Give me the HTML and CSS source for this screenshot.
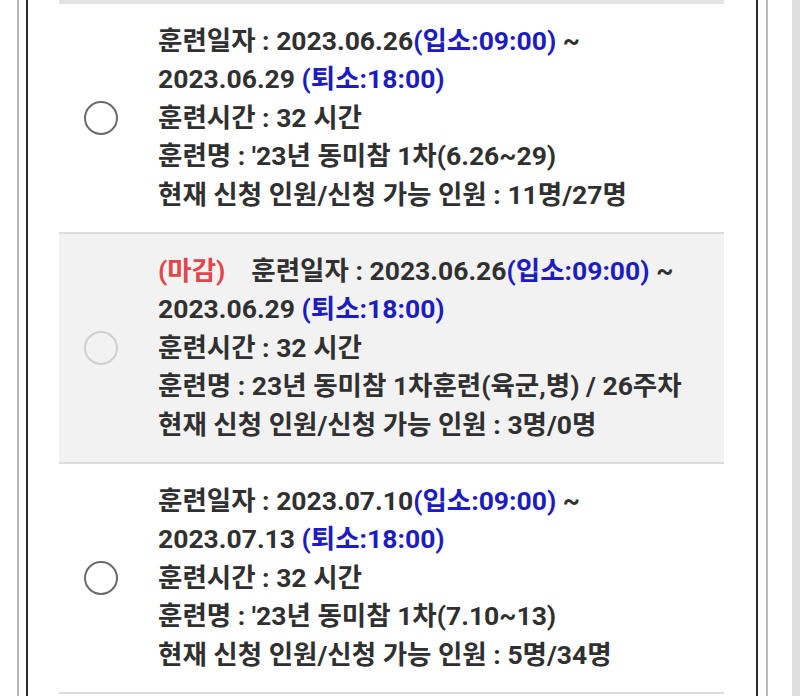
FILE: index.html
```html
<!DOCTYPE html>
<html lang="ko">
<head>
    <meta charset="UTF-8">
    <meta name="viewport" content="width=device-width, initial-scale=1.0">
    <title>훈련 신청</title>
    <link rel="stylesheet" href="styles.css">
</head>
<body>
    <div class="frame">
        <div class="panel">
            <ul class="course-list">
                <li class="course">
                    <span class="radio"></span>
                    <div class="info">
                        <p>훈련일자 : 2023.06.26<span class="time">(입소:09:00)</span> ~<br>2023.06.29 <span class="time">(퇴소:18:00)</span></p>
                        <p>훈련시간 : 32 시간</p>
                        <p>훈련명 : '23년 동미참 1차(6.26~29)</p>
                        <p>현재 신청 인원/신청 가능 인원 : 11명/27명</p>
                    </div>
                </li>
                <li class="course closed">
                    <span class="radio"></span>
                    <div class="info">
                        <p><span class="badge">(마감)</span>훈련일자 : 2023.06.26<span class="time">(입소:09:00)</span> ~<br>2023.06.29 <span class="time">(퇴소:18:00)</span></p>
                        <p>훈련시간 : 32 시간</p>
                        <p>훈련명 : 23년 동미참 1차훈련(육군,병) / 26주차</p>
                        <p>현재 신청 인원/신청 가능 인원 : 3명/0명</p>
                    </div>
                </li>
                <li class="course">
                    <span class="radio"></span>
                    <div class="info">
                        <p>훈련일자 : 2023.07.10<span class="time">(입소:09:00)</span> ~<br>2023.07.13 <span class="time">(퇴소:18:00)</span></p>
                        <p>훈련시간 : 32 시간</p>
                        <p>훈련명 : '23년 동미참 1차(7.10~13)</p>
                        <p>현재 신청 인원/신청 가능 인원 : 5명/34명</p>
                    </div>
                </li>
            </ul>
        </div>
    </div>
    <div class="scrollbar"></div>
</body>
</html>
```

FILE: styles.css
```css
* {
    margin: 0;
    padding: 0;
    box-sizing: border-box;
}

body {
    background: #fff;
    color: #303030;
    font-family: 'Roboto', 'Noto Sans CJK KR', sans-serif;
    overflow: hidden;
}

.frame {
    margin-left: 17px;
    width: 751px;
    min-height: 696px;
    border-left: 2px solid #b8b8b8;
    border-right: 2px solid #b8b8b8;
    padding: 0 8px 0 7px;
}

.panel {
    min-height: 696px;
    border-left: 2px solid #2c2c2c;
    border-right: 2px solid #2c2c2c;
    padding: 0 32px 0 31px;
}

.course-list {
    list-style: none;
    border-top: 4px solid #e4e4e4;
}

.course {
    display: flex;
    align-items: center;
    min-height: 230px;
    padding: 18px 0 18px 25px;
    border-bottom: 2px solid #dcdcdc;
}

.course.closed {
    background: #f2f2f2;
}

.radio {
    flex: none;
    width: 34px;
    height: 34px;
    border: 2px solid #6a6a6a;
    border-radius: 50%;
    background: #fff;
    margin-right: 40px;
}

.closed .radio {
    border-color: #cfcfcf;
    background: #f2f2f2;
}

.info p {
    font-size: 26.5px;
    font-weight: 700;
    line-height: 38.4px;
    white-space: nowrap;
}

.time {
    color: #1c1cc0;
}

.badge {
    color: #e0464b;
    margin-right: 26px;
}

.scrollbar {
    position: fixed;
    top: 0;
    right: 0;
    width: 8px;
    height: 100%;
    background: #dedede;
}
```
